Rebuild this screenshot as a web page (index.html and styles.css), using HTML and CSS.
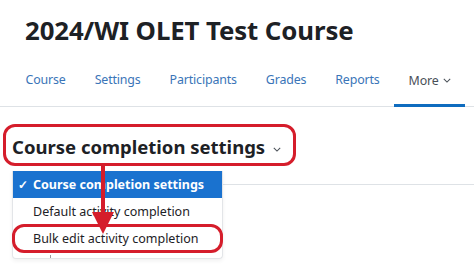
FILE: index.html
```html
<!DOCTYPE html>
<html>
<head>
<meta charset="utf-8">
<link rel="stylesheet" href="styles.css">
</head>
<body>
<header class="page-header">
  <h1 class="course-title">2024/WI OLET Test Course</h1>
</header>
<nav class="secondary-nav">
  <a class="nav-link" href="#">Course</a>
  <a class="nav-link" href="#">Settings</a>
  <a class="nav-link" href="#">Participants</a>
  <a class="nav-link" href="#">Grades</a>
  <a class="nav-link" href="#">Reports</a>
  <a class="nav-link active" href="#">More <svg class="chev" viewBox="0 0 10 6" width="8" height="5"><path d="M1 1l4 4 4-4" fill="none" stroke="currentColor" stroke-width="1.3"/></svg></a>
</nav>
<main class="content">
  <div class="heading-row">
    <h2 class="page-heading">Course completion settings <svg class="chev" viewBox="0 0 10 6" width="8" height="5"><path d="M1 1l4 4 4-4" fill="none" stroke="currentColor" stroke-width="1.3"/></svg></h2>
    <div class="annot-box heading-box"></div>
  </div>
  <div class="rule-row"></div>
  <ul class="dropdown">
    <li class="dd-item selected"><span class="check">✓</span>Course completion settings</li>
    <li class="dd-item">Default activity completion</li>
    <li class="dd-item">Bulk edit activity completion</li>
  </ul>
  <div class="annot-box item-box"></div>
  <svg class="annot-arrow" viewBox="0 0 24 74" width="24" height="74">
    <rect x="10" y="0" width="4" height="52" fill="#d51d2b"/>
    <polygon points="1,48 23,48 12,70" fill="#d51d2b"/>
  </svg>
  <div class="tick"></div>
</main>
</body>
</html>
```
FILE: styles.css
```css
* { box-sizing: border-box; }
body {
  margin: 0;
  background: #fff;
  font-family: "Noto Sans", "Open Sans", sans-serif;
  color: #1d2125;
  width: 474px;
  height: 276px;
  overflow: hidden;
  position: relative;
}
.page-header {
  padding: 12px 0 0 25px;
}
.course-title {
  margin: 0;
  font-size: 25.8px;
  font-weight: 700;
  line-height: 36px;
  letter-spacing: -0.1px;
}
.secondary-nav {
  display: flex;
  margin-top: 14px;
  padding-left: 11px;
  border-bottom: 1px solid #dee2e6;
  height: 45px;
  align-items: stretch;
}
.nav-link {
  display: flex;
  align-items: center;
  padding: 0 14.5px 6px;
  font-size: 12.4px;
  letter-spacing: -0.15px;
  color: #3a75b8;
  text-decoration: none;
  border-bottom: 3px solid transparent;
}
.nav-link.active {
  color: #495057;
  border-bottom-color: #0f6cbf;
  margin-bottom: -1px;
}
.chev { margin-left: 4px; }
.content {
  position: relative;
  height: 168px;
}
.heading-row {
  position: relative;
  padding: 26px 0 0 12px;
}
.page-heading {
  margin: 0;
  font-size: 18.5px;
  font-weight: 700;
  line-height: 28px;
  display: flex;
  align-items: center;
}
.page-heading .chev { margin-left: 8px; margin-top: 4px; color: #495057; }
.annot-box {
  position: absolute;
  border: 3px solid #d51d2b;
  border-radius: 12px;
}
.heading-box {
  left: 3px;
  top: 17px;
  width: 293px;
  height: 42px;
}
.rule-row {
  margin: 23px 0 0 223px;
  border-top: 1px solid #dee2e6;
}
.dropdown {
  position: absolute;
  left: 12px;
  top: 64px;
  width: 211px;
  margin: 0;
  padding: 0 0 6px;
  list-style: none;
  background: #fff;
  border: 1px solid #e3e5e8;
  border-top: none;
  border-radius: 0 0 4px 4px;
  box-shadow: 0 2px 4px rgba(0,0,0,0.06);
}
.dd-item {
  height: 27px;
  display: flex;
  align-items: center;
  padding-left: 20px;
  font-size: 12.5px;
  color: #1d2125;
  white-space: nowrap;
}
.dd-item.selected {
  background: #1a72cf;
  color: #fff;
  font-weight: 700;
  padding-left: 5px;
}
.check { width: 15px; font-weight: 700; font-size: 12px; }
.item-box {
  left: 12px;
  top: 117px;
  width: 211px;
  height: 29px;
}
.annot-arrow {
  position: absolute;
  left: 91px;
  top: 57px;
}
.tick {
  position: absolute;
  left: 50px;
  top: 148px;
  width: 1px;
  height: 3px;
  background: #999;
}
```
